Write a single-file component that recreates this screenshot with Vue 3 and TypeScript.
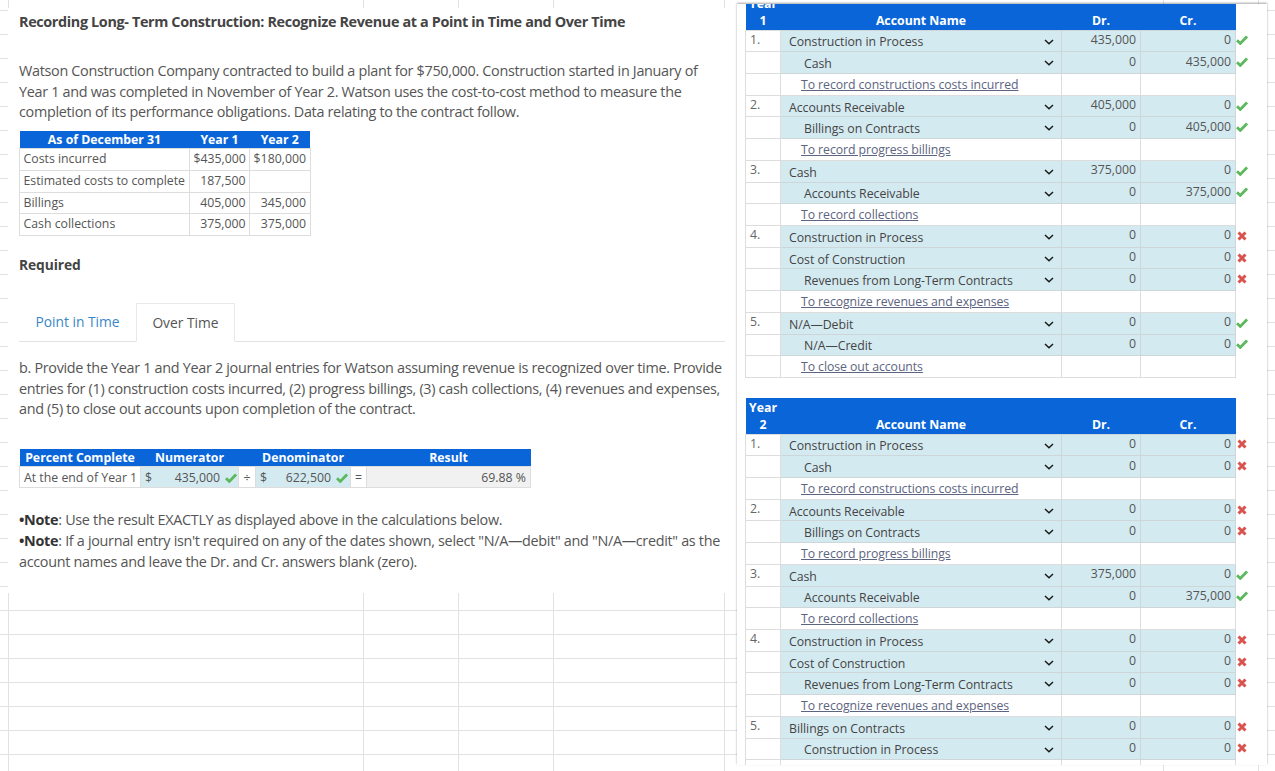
<template>
  <div class="page">
    <section class="question">
      <h1 class="title">Recording Long- Term Construction: Recognize Revenue at a Point in Time and Over Time</h1>
      <p class="intro">
        Watson Construction Company contracted to build a plant for $750,000. Construction started in January of
        Year 1 and was completed in November of Year 2. Watson uses the cost-to-cost method to measure the
        completion of its performance obligations. Data relating to the contract follow.
      </p>

      <table class="data">
        <thead>
          <tr><th>As of December 31</th><th>Year 1</th><th>Year 2</th></tr>
        </thead>
        <tbody>
          <tr v-for="row in contractData" :key="row[0]">
            <td>{{ row[0] }}</td>
            <td class="num">{{ row[1] }}</td>
            <td class="num">{{ row[2] }}</td>
          </tr>
        </tbody>
      </table>

      <h2 class="required">Required</h2>

      <div class="tabs">
        <a class="tab">Point in Time</a>
        <a class="tab active">Over Time</a>
      </div>

      <p class="intro part">
        b. Provide the Year 1 and Year 2 journal entries for Watson assuming revenue is recognized over time. Provide
        entries for (1) construction costs incurred, (2) progress billings, (3) cash collections, (4) revenues and expenses,
        and (5) to close out accounts upon completion of the contract.
      </p>

      <table class="calc">
        <thead>
          <tr>
            <th class="left">Percent Complete</th>
            <th>Numerator</th>
            <th></th>
            <th>Denominator</th>
            <th></th>
            <th>Result</th>
          </tr>
        </thead>
        <tbody>
          <tr>
            <td>At the end of Year 1</td>
            <td class="field">
              <span>$</span><span class="val">435,000</span>
              <svg class="mark" viewBox="0 0 12 10"><path d="M1 5.2 4.3 8.4 11 1.4" fill="none" stroke="#5cb85c" stroke-width="2.8" /></svg>
            </td>
            <td class="op">÷</td>
            <td class="field">
              <span>$</span><span class="val">622,500</span>
              <svg class="mark" viewBox="0 0 12 10"><path d="M1 5.2 4.3 8.4 11 1.4" fill="none" stroke="#5cb85c" stroke-width="2.8" /></svg>
            </td>
            <td class="op">=</td>
            <td class="result">69.88 %</td>
          </tr>
        </tbody>
      </table>

      <p class="intro notes">
        <b>•Note</b>: Use the result EXACTLY as displayed above in the calculations below.<br />
        <b>•Note</b>: If a journal entry isn't required on any of the dates shown, select "N/A—debit" and "N/A—credit" as the
        account names and leave the Dr. and Cr. answers blank (zero).
      </p>
    </section>

    <section class="journals">
      <table v-for="year in journals" :key="year.label" class="journal">
        <colgroup>
          <col class="c-no" /><col class="c-acct" /><col class="c-dr" /><col class="c-cr" /><col class="c-mark" />
        </colgroup>
        <thead>
          <tr>
            <th class="yr">Year<br />{{ year.label }}</th>
            <th>Account Name</th>
            <th>Dr.</th>
            <th>Cr.</th>
            <th class="blank"></th>
          </tr>
        </thead>
        <tbody>
          <template v-for="(entry, i) in year.entries" :key="i">
            <tr v-for="(line, j) in entry.lines" :key="j">
              <td class="no">{{ j === 0 ? `${i + 1}.` : '' }}</td>
              <td class="acct">
                <span :class="{ indent: line.indent }">{{ line.name }}</span>
                <svg class="chev" viewBox="0 0 10 6"><path d="M1 1 5 4.8 9 1" fill="none" stroke="#1a1a1a" stroke-width="1.5" /></svg>
              </td>
              <td class="amt">{{ line.dr }}</td>
              <td class="amt">{{ line.cr }}</td>
              <td class="status">
                <svg v-if="line.ok" class="mark" viewBox="0 0 12 10"><path d="M1 5.2 4.3 8.4 11 1.4" fill="none" stroke="#5cb85c" stroke-width="2.8" /></svg>
                <svg v-else class="mark cross" viewBox="0 0 10 10"><path d="M1.5 1.5 8.5 8.5M8.5 1.5 1.5 8.5" fill="none" stroke="#d9534f" stroke-width="3" /></svg>
              </td>
            </tr>
            <tr class="memo-row">
              <td class="no"></td>
              <td class="memo"><u>{{ entry.memo }}</u></td>
              <td></td>
              <td></td>
              <td class="status"></td>
            </tr>
          </template>
        </tbody>
      </table>
    </section>
  </div>
</template>

<script setup lang="ts">
interface Line {
  name: string
  dr: string
  cr: string
  ok: boolean
  indent?: boolean
}

interface Entry {
  lines: Line[]
  memo: string
}

const contractData = [
  ['Costs incurred', '$435,000', '$180,000'],
  ['Estimated costs to complete', '187,500', ''],
  ['Billings', '405,000', '345,000'],
  ['Cash collections', '375,000', '375,000']
]

const cip = 'Construction in Process'
const ar = 'Accounts Receivable'
const boc = 'Billings on Contracts'

const revenueEntry: Entry = {
  lines: [
    { name: cip, dr: '0', cr: '0', ok: false },
    { name: 'Cost of Construction', dr: '0', cr: '0', ok: false },
    { name: 'Revenues from Long-Term Contracts', dr: '0', cr: '0', ok: false, indent: true }
  ],
  memo: 'To recognize revenues and expenses'
}

const collections: Entry = {
  lines: [
    { name: 'Cash', dr: '375,000', cr: '0', ok: true },
    { name: ar, dr: '0', cr: '375,000', ok: true, indent: true }
  ],
  memo: 'To record collections'
}

const journals: { label: string; entries: Entry[] }[] = [
  {
    label: '1',
    entries: [
      {
        lines: [
          { name: cip, dr: '435,000', cr: '0', ok: true },
          { name: 'Cash', dr: '0', cr: '435,000', ok: true, indent: true }
        ],
        memo: 'To record constructions costs incurred'
      },
      {
        lines: [
          { name: ar, dr: '405,000', cr: '0', ok: true },
          { name: boc, dr: '0', cr: '405,000', ok: true, indent: true }
        ],
        memo: 'To record progress billings'
      },
      collections,
      revenueEntry,
      {
        lines: [
          { name: 'N/A—Debit', dr: '0', cr: '0', ok: true },
          { name: 'N/A—Credit', dr: '0', cr: '0', ok: true, indent: true }
        ],
        memo: 'To close out accounts'
      }
    ]
  },
  {
    label: '2',
    entries: [
      {
        lines: [
          { name: cip, dr: '0', cr: '0', ok: false },
          { name: 'Cash', dr: '0', cr: '0', ok: false, indent: true }
        ],
        memo: 'To record constructions costs incurred'
      },
      {
        lines: [
          { name: ar, dr: '0', cr: '0', ok: false },
          { name: boc, dr: '0', cr: '0', ok: false, indent: true }
        ],
        memo: 'To record progress billings'
      },
      collections,
      revenueEntry,
      {
        lines: [
          { name: boc, dr: '0', cr: '0', ok: false },
          { name: cip, dr: '0', cr: '0', ok: false, indent: true }
        ],
        memo: 'To close out accounts'
      }
    ]
  }
]
</script>

<style scoped>
.page {
  display: flex;
  align-items: flex-start;
  width: 1275px;
  height: 771px;
  overflow: hidden;
  font-family: "Open Sans", "Noto Sans", sans-serif;
  color: #555;
  background-color: #fff;
  background-image:
    linear-gradient(#e2e2e2, #e2e2e2),
    linear-gradient(#e2e2e2, #e2e2e2),
    linear-gradient(#e2e2e2, #e2e2e2),
    linear-gradient(#e2e2e2, #e2e2e2),
    linear-gradient(#e2e2e2, #e2e2e2),
    linear-gradient(#e2e2e2, #e2e2e2),
    linear-gradient(#e2e2e2, #e2e2e2),
    repeating-linear-gradient(to bottom, transparent 0, transparent 23px, #e2e2e2 23px, #e2e2e2 24px);
  background-size: 1px 100%, 1px 100%, 1px 100%, 1px 100%, 1px 100%, 1px 100%, 1px 100%, 100% 200%;
  background-position: 8px 0, 363px 0, 458px 0, 553px 0, 724px 0, 1163px 0, 1258px 0, 0 -13px;
  background-repeat: no-repeat;
}

.question {
  flex: none;
  width: 718px;
  height: 585px;
  margin: 8px 0 0 8px;
  padding-left: 11px;
  background: #fff;
}

.title {
  margin: 4px 0 0;
  font-size: 14.4px;
  line-height: 20px;
  font-weight: 700;
  letter-spacing: -0.36px;
  color: #444;
}

.intro {
  margin: 29px 0 0;
  width: 707px;
  font-size: 14.4px;
  line-height: 20.6px;
  letter-spacing: -0.31px;
  color: #555;
}

.intro b {
  color: #333;
}

table {
  border-collapse: collapse;
  table-layout: fixed;
}

td, th {
  box-sizing: border-box;
}

.data {
  width: 291.5px;
  margin-top: 8px;
  font-size: 12.3px;
}

.data th {
  height: 18px;
  padding: 0;
  background: #0a66d8;
  color: #fff;
  font-weight: 700;
  line-height: 15px;
  text-align: center;
}

.data th:nth-child(1), .data td:nth-child(1) { width: 170px; }
.data th:nth-child(2), .data td:nth-child(2) { width: 60px; }

.data td {
  height: 21.7px;
  padding: 0 3.5px 2px;
  border: 1px solid #ddd;
  line-height: 15px;
  white-space: nowrap;
}

.num {
  text-align: right;
}

.required {
  margin: 19px 0 0;
  font-size: 13.8px;
  line-height: 20px;
  font-weight: 700;
  letter-spacing: -0.1px;
  color: #444;
}

.tabs {
  display: flex;
  width: 706px;
  margin-top: 28px;
  border-bottom: 1px solid #e2e2e2;
  font-size: 13.8px;
}

.tab {
  display: block;
  width: 117px;
  height: 38px;
  line-height: 38px;
  text-align: center;
  color: #3a87c8;
}

.tab.active {
  box-sizing: border-box;
  width: 99px;
  margin-bottom: -1px;
  height: 39px;
  border: 1px solid #e8e8e8;
  border-bottom-color: #fff;
  background: #fff;
  color: #555;
}

.part {
  margin-top: 16px;
}

.calc {
  width: 512px;
  margin-top: 29px;
  font-size: 12.3px;
}

.calc th:nth-child(1) { width: 121px; }
.calc th:nth-child(2) { width: 98px; }
.calc th:nth-child(3) { width: 17px; }
.calc th:nth-child(4) { width: 95px; }
.calc th:nth-child(5) { width: 16px; }

.calc th {
  height: 18px;
  padding: 0;
  background: #0a66d8;
  color: #fff;
  font-weight: 700;
  line-height: 15px;
  text-align: center;
  white-space: nowrap;
}

.calc td {
  height: 21px;
  padding: 0 4px;
  border: 1px solid #ddd;
  line-height: 15px;
  white-space: nowrap;
}

.field {
  background: #d4eaf1;
}

.field .val {
  display: inline-block;
  width: 68px;
  text-align: right;
}

.calc .field:nth-child(4) .val {
  width: 64px;
}

.calc .mark {
  margin-left: 5px;
  vertical-align: -1px;
}

.calc .op {
  padding: 0;
  text-align: center;
}

.calc .result {
  background: #f1f1f1;
  text-align: right;
}

.notes {
  margin-top: 22px;
}

.journals {
  flex: none;
  display: flex;
  flex-direction: column;
  gap: 20px;
  width: 530px;
  height: 761px;
  margin-top: 4px;
  padding-left: 8px;
  box-sizing: border-box;
  overflow: hidden;
  background: #fff;
  box-shadow: 0 -1px 2px rgba(0, 0, 0, 0.35);
}

.journal {
  flex: none;
  width: 522px;
  font-size: 12.3px;
}

.journal:first-child {
  margin-top: -10px;
}

.c-no { width: 35px; }
.c-acct { width: 281px; }
.c-dr { width: 79px; }
.c-cr { width: 95px; }
.c-mark { width: 32px; }

.journal th {
  height: 36px;
  padding: 0 0 1px;
  background: #0a66d8;
  color: #fff;
  font-weight: 700;
  line-height: 17px;
  text-align: center;
  vertical-align: bottom;
}

.journal th.blank {
  background: #fff;
}

.journal td {
  height: 21.72px;
  padding: 0;
  border: 1px solid #ddd;
  line-height: 15px;
  white-space: nowrap;
}

.journal td.status {
  padding: 0 0 1px;
  border: none;
}

.status .mark {
  display: block;
}

.journal td.no {
  padding: 0 0 3px 4px;
  color: #666;
}

.journal .acct {
  position: relative;
  padding: 2px 0 0 8px;
  background: #d4eaf1;
  border-color: #cfd6da;
  letter-spacing: -0.04px;
  color: #444;
}

.indent {
  margin-left: 15px;
}

.chev {
  position: absolute;
  top: 8px;
  right: 7px;
  width: 10px;
  height: 6px;
}

.journal .amt {
  padding: 0 4px 3px 0;
  text-align: right;
  color: #555;
}

.journal tr:not(.memo-row) .amt {
  background: #d4eaf1;
  border-color: #cfd6da;
}

.memo {
  padding-left: 20px !important;
  letter-spacing: -0.08px;
  color: #5c6480;
}

.mark {
  display: inline-block;
  width: 12px;
  height: 10px;
  vertical-align: middle;
}

.mark.cross {
  width: 10px;
  margin-left: 1px;
}
</style>

<style>
html, body {
  margin: 0;
  overflow: hidden;
}
</style>
